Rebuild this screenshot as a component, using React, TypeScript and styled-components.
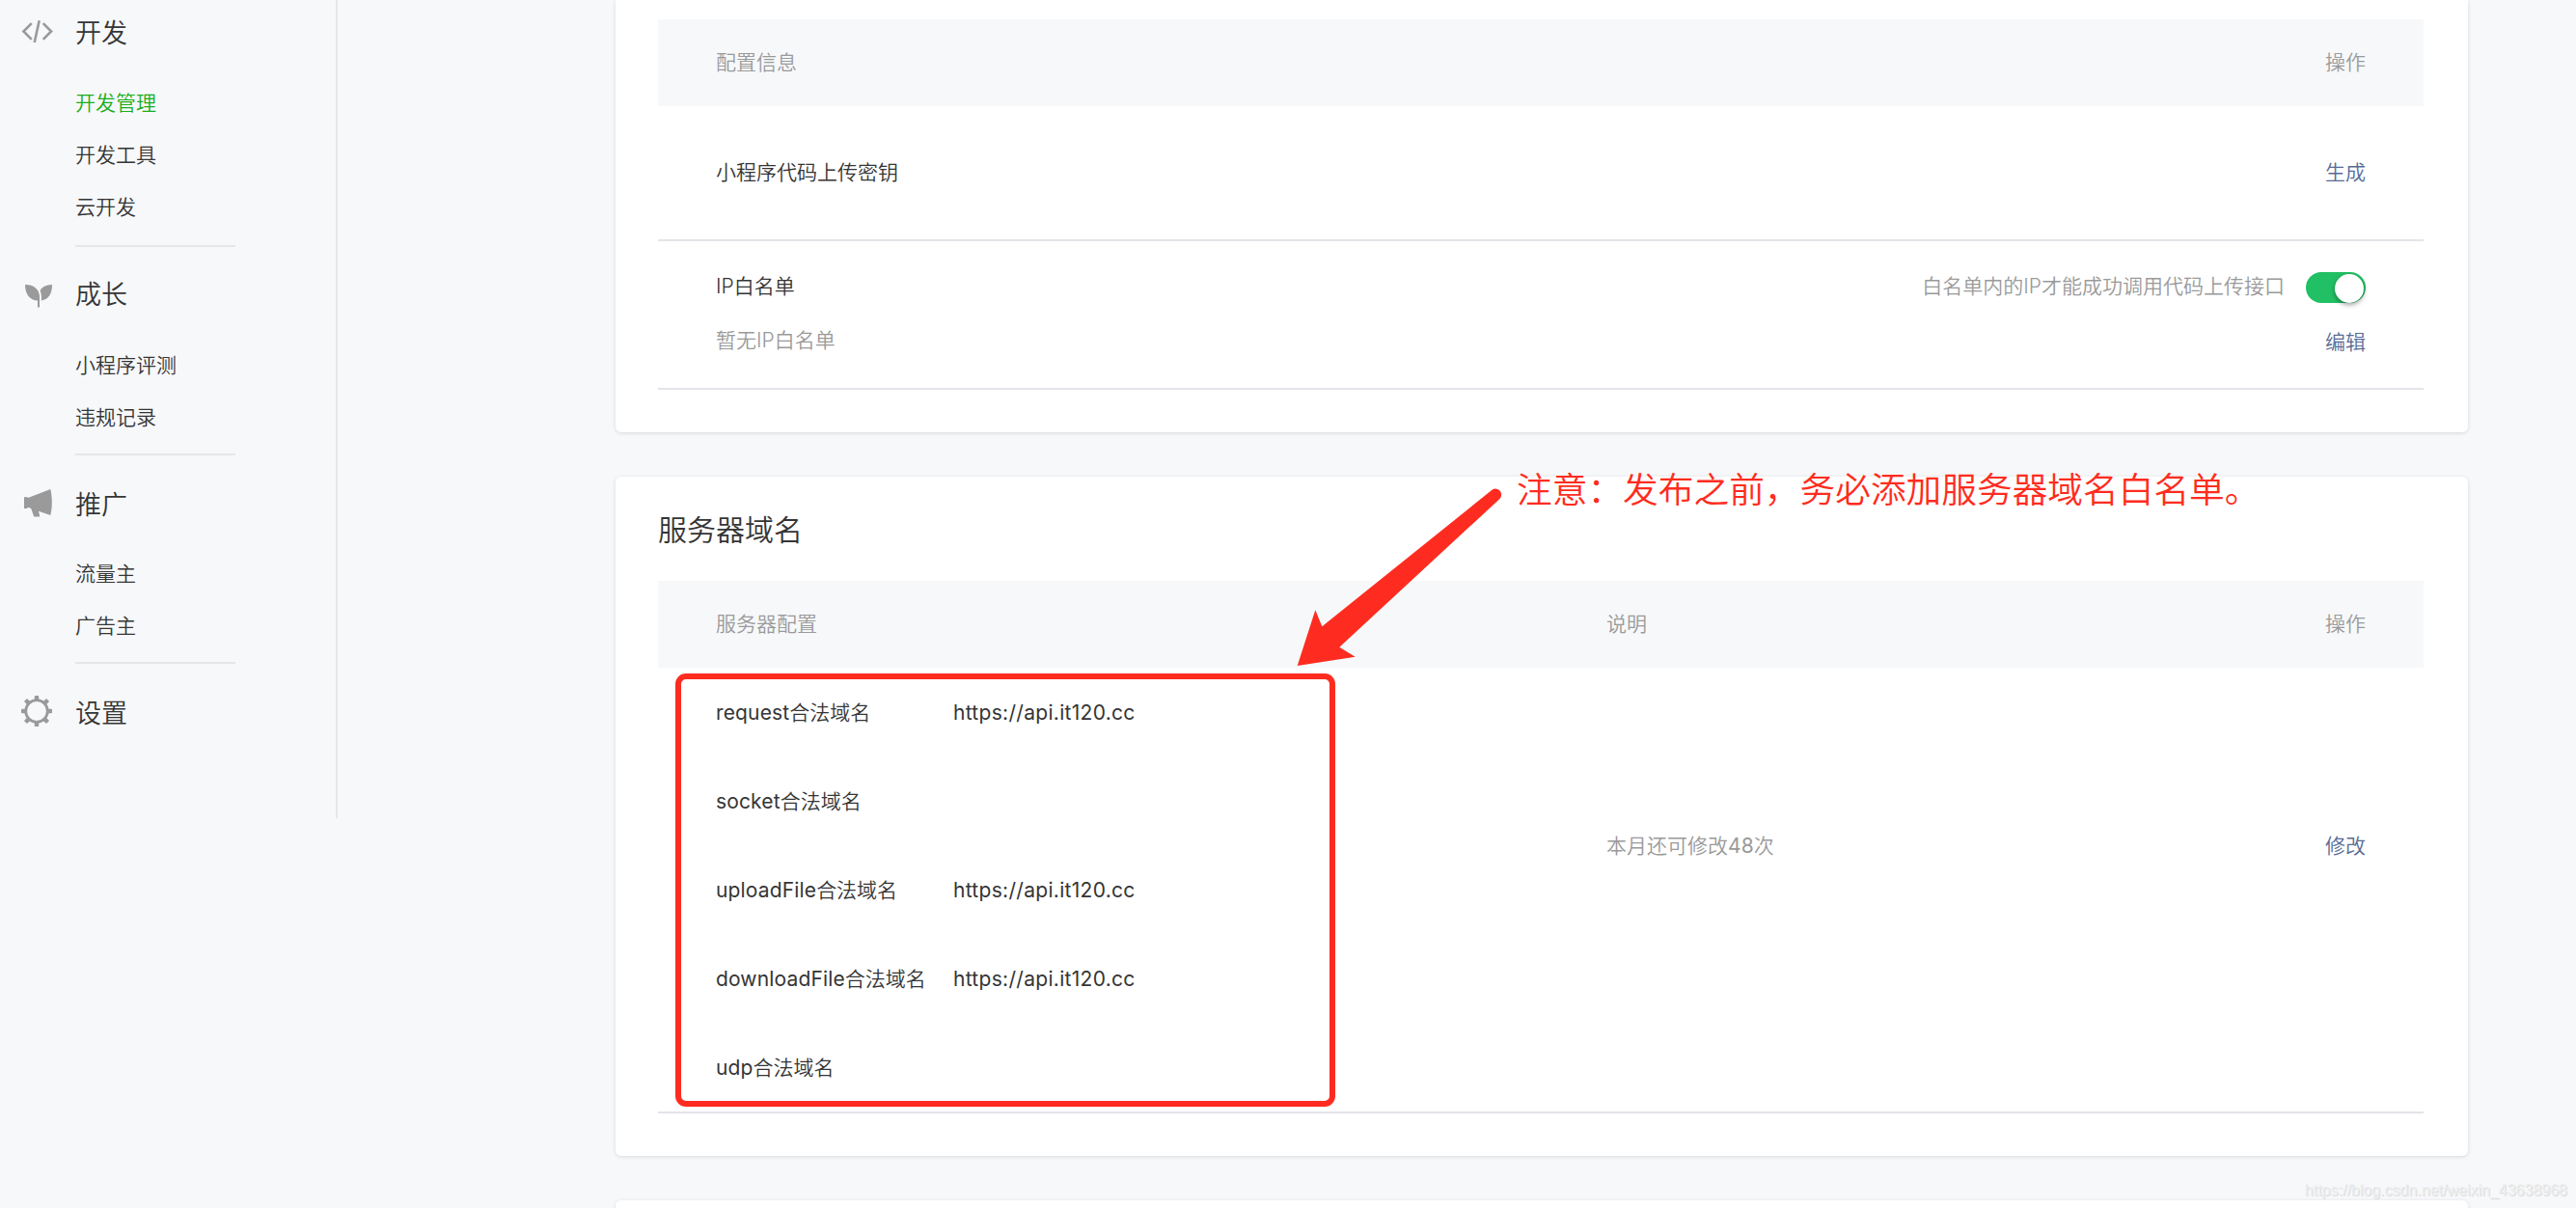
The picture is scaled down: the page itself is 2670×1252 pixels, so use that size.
import React from 'react';
import styled, { createGlobalStyle } from 'styled-components';

const GlobalStyle = createGlobalStyle`
  * { box-sizing: border-box; }
  body {
    margin: 0;
    background: #f7f8fa;
    color: #353535;
    font-family: Inter, 'Noto Sans CJK SC', sans-serif;
    font-size: 21px;
    font-weight: 350;
    overflow: hidden;
  }
`;

const Page = styled.div`
  position: relative;
  display: flex;
  align-items: flex-start;
  width: 2670px;
  height: 1252px;
  overflow: hidden;
`;

const Sidebar = styled.nav`
  width: 350px;
  height: 848px;
  margin-right: 288px;
  border-right: 2px solid #e5e7e9;
  overflow: hidden;
`;

const Group = styled.section<{ $first?: boolean }>`
  margin-top: ${(p) => (p.$first ? '-16px' : '0')};
`;

const GroupHead = styled.div<{ $drop: number; $lift: number }>`
  display: flex;
  align-items: center;
  height: 96px;
  padding-top: ${(p) => p.$drop}px;
  padding-bottom: ${(p) => p.$lift}px;
  font-size: 27px;
`;

const IconSlot = styled.span<{ $left: number; $drop: number }>`
  display: flex;
  width: 78px;
  padding-left: ${(p) => p.$left}px;
  padding-top: ${(p) => p.$drop}px;
  svg { display: block; fill: #9a9a9a; }
`;

const MenuItem = styled.a<{ $active?: boolean }>`
  display: block;
  height: 54px;
  line-height: 54px;
  padding-left: 78px;
  color: ${(p) => (p.$active ? '#1aad19' : 'inherit')};
`;

const MenuDivider = styled.div<{ $gap: number }>`
  width: 166px;
  height: 2px;
  margin: ${(p) => p.$gap}px 0 0 78px;
  background: #e5e7e9;
`;

const Main = styled.main`
  display: flex;
  flex-direction: column;
  gap: 46px;
  width: 1920px;
`;

const Card = styled.section<{ $height: number; $open?: boolean }>`
  flex: none;
  height: ${(p) => p.$height}px;
  padding: ${(p) => (p.$open ? '20px' : '0')} 46px 0 44px;
  background: #fff;
  border-radius: ${(p) => (p.$open ? '0 0 6px 6px' : '6px')};
  box-shadow: 0 1px 4px rgba(0, 0, 0, 0.13);
`;

const CardTitle = styled.h2`
  margin: 0;
  height: 108px;
  line-height: 110px;
  font-size: 30px;
  font-weight: inherit;
`;

const HeadRow = styled.div`
  display: flex;
  align-items: center;
  height: 90px;
  padding: 0 60px 4px;
  background: #f7f8fa;
  color: #9a9a9a;
`;

const Row = styled.div<{ $height: number; $lift?: number }>`
  display: flex;
  align-items: center;
  height: ${(p) => p.$height}px;
  padding: 0 60px ${(p) => p.$lift ?? 0}px;
  border-bottom: 2px solid #e4e4ea;
`;

const Cell = styled.div<{ $width?: number }>`
  flex: ${(p) => (p.$width ? 'none' : '1')};
  width: ${(p) => (p.$width ? `${p.$width}px` : 'auto')};
`;

const Link = styled.a`
  color: #576b95;
`;

const Stack = styled.div<{ $end?: boolean }>`
  flex: ${(p) => (p.$end ? 'none' : '1')};
  display: flex;
  flex-direction: column;
  align-items: ${(p) => (p.$end ? 'flex-end' : 'flex-start')};
  gap: 26px;
  line-height: 30px;
  height: 88px;
`;

const Muted = styled.span`
  color: #9a9a9a;
`;

const SwitchLine = styled.div`
  display: flex;
  align-items: flex-start;
  gap: 22px;
  height: 32px;
`;

const Switch = styled.span`
  display: flex;
  justify-content: flex-end;
  width: 62px;
  height: 32px;
  padding: 2px 2px 0 0;
  border-radius: 16px;
  background: #22c064;
`;

const Knob = styled.span`
  width: 30px;
  height: 30px;
  border-radius: 50%;
  background: #fff;
  box-shadow: 0 2px 5px rgba(0, 0, 0, 0.4);
`;

const DomainRow = styled.div`
  display: flex;
  height: 92px;
  line-height: 94px;
`;

const DomainName = styled.span`
  width: 246px;
`;

const Latin = styled.span`
  font-weight: 400;
  letter-spacing: 0.15px;
`;

const DomainUrl = styled.span`
  flex: none;
  width: 677px;
  font-weight: 400;
  letter-spacing: 0.3px;
`;

const QuotaCell = styled.div`
  flex: 1;
  display: flex;
  justify-content: space-between;
  align-self: flex-start;
  height: 366px;
  align-items: center;
`;

const HighlightBox = styled.div`
  position: absolute;
  left: 700px;
  top: 698px;
  width: 684px;
  height: 449px;
  border: 6px solid #fe2c20;
  border-radius: 11px;
`;

const Arrow = styled.svg`
  position: absolute;
  left: 1340px;
  top: 500px;
  fill: #fe2c20;
`;

const Note = styled.div`
  position: absolute;
  left: 1572px;
  top: 481px;
  line-height: 54px;
  font-size: 36.7px;
  color: #fe2c20;
  white-space: nowrap;
`;

const Watermark = styled.div`
  position: absolute;
  right: 9px;
  top: 1224px;
  line-height: 20px;
  font-family: 'Liberation Sans', Arial, sans-serif;
  font-size: 16px;
  color: #eeefef;
  text-shadow: 1px 1px 0 #dcdddd;
  white-space: nowrap;
`;

const CodeIcon = () => (
  <svg width="34" height="26" viewBox="0 0 34 26">
    <path
      d="M10.8 4.2 2.4 12.5l8.4 8.3M22.7 4.2l8.4 8.3-8.4 8.3M18.7 1.2 13.7 24"
      style={{ fill: 'none' }}
      stroke="#9a9a9a"
      strokeWidth="2.6"
    />
  </svg>
);

const SproutIcon = () => (
  <svg width="28" height="24" viewBox="0 0 28 24">
    <path d="M0 0C9 0 14.5 4.5 15 12v11.5h-2V16.6C5 16.2 0 10 0 0Z" />
    <path d="M28 0C22 .2 17.5 2.4 15.6 6.2c1.2 2.8 1.6 5.8 1.3 10.2C23.8 15.5 28 10.5 28 0Z" />
  </svg>
);

const MegaphoneIcon = () => (
  <svg width="29" height="29" viewBox="0 0 29 29">
    <path d="M0 8.2 3 8l1 1L27.3 0c2 8 2 19 0 27L15 22.7l1.3 5.8H10.2L7.2 20 4 18.8 3 20H0Z" />
  </svg>
);

const GearIcon = () => (
  <svg width="32" height="32" viewBox="0 0 32 32">
    {[0, 45, 90, 135, 180, 225, 270, 315].map((a) => (
      <rect key={a} x="13.8" y={a % 90 ? -0.4 : 0} width="4.4" height="5" rx="0.8" transform={`rotate(${a} 16 16)`} />
    ))}
    <circle cx="16" cy="16" r="11.3" style={{ fill: 'none' }} stroke="#9a9a9a" strokeWidth="2.8" />
  </svg>
);

const menu = [
  { title: '开发', icon: <CodeIcon />, left: 21.5, drop: 2, headDrop: 0, headLift: 0, gap: 12, items: ['开发管理', '开发工具', '云开发'] },
  { title: '成长', icon: <SproutIcon />, left: 26, drop: 7, headDrop: 0, headLift: 2, gap: 10, items: ['小程序评测', '违规记录'] },
  { title: '推广', icon: <MegaphoneIcon />, left: 25, drop: 0, headDrop: 2, headLift: 0, gap: 10, items: ['流量主', '广告主'] },
  { title: '设置', icon: <GearIcon />, left: 22, drop: 0, headDrop: 2, headLift: 0, gap: 0, items: [] },
];

const domains = [
  ['request', 'https://api.it120.cc'],
  ['socket', ''],
  ['uploadFile', 'https://api.it120.cc'],
  ['downloadFile', 'https://api.it120.cc'],
  ['udp', ''],
];

export default function App() {
  return (
    <Page>
      <GlobalStyle />
      <Sidebar>
        {menu.map((g, i) => (
          <Group key={g.title} $first={i === 0}>
            <GroupHead $drop={g.headDrop} $lift={g.headLift}>
              <IconSlot $left={g.left} $drop={g.drop}>{g.icon}</IconSlot>
              {g.title}
            </GroupHead>
            {g.items.map((t) => (
              <MenuItem key={t} $active={t === '开发管理'}>{t}</MenuItem>
            ))}
            {g.items.length > 0 && <MenuDivider $gap={g.gap} />}
          </Group>
        ))}
      </Sidebar>

      <Main>
        <Card $height={448} $open>
          <HeadRow>
            <Cell>配置信息</Cell>
            <span>操作</span>
          </HeadRow>
          <Row $height={140} $lift={4}>
            <Cell>小程序代码上传密钥</Cell>
            <Link>生成</Link>
          </Row>
          <Row $height={154}>
            <Stack>
              <span>IP白名单</span>
              <Muted>暂无IP白名单</Muted>
            </Stack>
            <Stack $end>
              <SwitchLine>
                <Muted>白名单内的IP才能成功调用代码上传接口</Muted>
                <Switch><Knob /></Switch>
              </SwitchLine>
              <Link>编辑</Link>
            </Stack>
          </Row>
        </Card>

        <Card $height={704}>
          <CardTitle>服务器域名</CardTitle>
          <HeadRow>
            <Cell $width={923}>服务器配置</Cell>
            <Cell>说明</Cell>
            <span>操作</span>
          </HeadRow>
          <Row $height={462}>
            <Cell $width={923}>
              {domains.map(([name, url]) => (
                <DomainRow key={name}>
                  <DomainName><Latin>{name}</Latin>合法域名</DomainName>
                  <DomainUrl>{url}</DomainUrl>
                </DomainRow>
              ))}
            </Cell>
            <QuotaCell>
              <Muted>本月还可修改<Latin>48</Latin>次</Muted>
              <Link>修改</Link>
            </QuotaCell>
          </Row>
        </Card>

        <Card $height={60} />
      </Main>

      <HighlightBox />
      <Arrow width="220" height="195" viewBox="1340 500 220 195">
        <path d="M1344.7 690 1363.3 632.3 1370.3 649.3 1545.5 508.5A6 6 0 0 1 1554.5 517L1388.3 670.7 1404.7 680.7Z" />
      </Arrow>
      <Note>注意：发布之前，务必添加服务器域名白名单。</Note>
      <Watermark>https://blog.csdn.net/weixin_43638968</Watermark>
    </Page>
  );
}
